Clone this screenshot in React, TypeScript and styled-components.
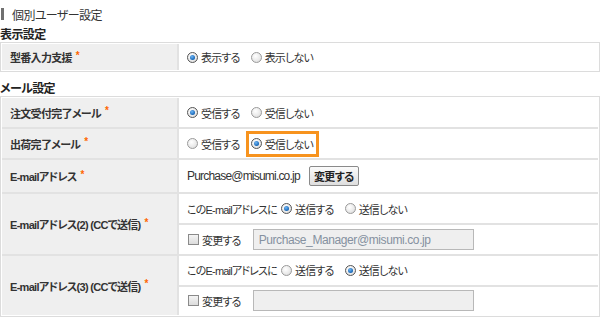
import React from "react";
import styled, { createGlobalStyle, css } from "styled-components";

const Global = createGlobalStyle`
  html, body { margin: 0; padding: 0; background: #fff; }
  body {
    font-family: Arial, "Liberation Sans", "Noto Sans CJK JP", sans-serif;
    font-feature-settings: "palt" 1;
    color: #333;
    font-size: 11px;
  }
  button { font-feature-settings: "palt" 1; }
`;

const Page = styled.div`
  width: 600px;
  height: 320px;
  overflow: hidden;
`;

const Title = styled.h1`
  margin: 0;
  height: 28px;
  display: flex;
  align-items: center;
  gap: 8px;
  padding-left: 1px;
  font-size: 12px;
  letter-spacing: -0.6px;
  font-weight: normal;
  color: #333;
  &::before {
    content: "";
    width: 3px;
    height: 12px;
    background: #707070;
  }
`;

const SectionHeading = styled.h2<{ $top?: number }>`
  margin: ${(p) => p.$top ?? 0}px 0 0 0;
  height: 14px;
  line-height: 14px;
  font-size: 12px;
  letter-spacing: -0.6px;
  font-weight: bold;
  color: #222;
`;

const Table = styled.div`
  display: grid;
  grid-template-columns: 177px 1fr;
  border: 1px solid #dcdcdc;
  padding: 1px;
  width: 596px;
`;

const Label = styled.div<{ $h: number; $last?: boolean }>`
  height: ${(p) => p.$h}px;
  background: #efefef;
  display: flex;
  align-items: center;
  padding-left: 8px;
  font-weight: bold;
  font-size: 11px;
  letter-spacing: -0.7px;
  color: #333;
  border-right: 2px solid #e2e2e2;
  ${(p) =>
    !p.$last &&
    css`
      border-bottom: 2px solid #e2e2e2;
    `}
  box-sizing: border-box;
`;

const Value = styled.div<{ $h: number; $last?: boolean }>`
  height: ${(p) => p.$h}px;
  display: flex;
  flex-direction: column;
  box-sizing: border-box;
  ${(p) =>
    !p.$last &&
    css`
      border-bottom: 2px solid #e2e2e2;
    `}
`;

const Line = styled.div<{ $sep?: boolean }>`
  flex: 1;
  display: flex;
  align-items: center;
  padding-left: 8px;
  ${(p) =>
    p.$sep &&
    css`
      border-bottom: 2px solid #e2e2e2;
    `}
`;

const Req = styled.span`
  color: #f60;
  font-size: 10px;
  margin-left: 4px;
  position: relative;
  top: -2px;
`;

const Choice = styled.label<{ $hl?: boolean }>`
  display: inline-flex;
  align-items: center;
  gap: 3px;
  margin-right: 11px;
  color: #333;
  font-size: 11px;
  letter-spacing: -0.8px;
  ${(p) =>
    p.$hl &&
    css`
      border: 3px solid #f7931e;
      padding: 2px 3px 2px 2px;
      margin-left: -5px;
    `}
`;

const RadioDot = styled.span<{ $on?: boolean }>`
  width: 11px;
  height: 11px;
  border-radius: 50%;
  box-sizing: border-box;
  border: 1px solid #9a9a9a;
  background: radial-gradient(circle at 40% 35%, #ffffff 0%, #e8e8e8 60%, #cfcfcf 100%);
  display: inline-flex;
  align-items: center;
  justify-content: center;
  ${(p) =>
    p.$on &&
    css`
      border-color: #555;
      &::after {
        content: "";
        width: 5px;
        height: 5px;
        border-radius: 50%;
        background: radial-gradient(circle at 40% 35%, #6fb6f5 0%, #1565b5 70%, #0a3d78 100%);
      }
    `}
`;

const Check = styled.span`
  width: 11px;
  height: 11px;
  box-sizing: border-box;
  border: 1px solid #8a8a8a;
  background: linear-gradient(#f4f4f4, #dcdcdc);
  display: inline-block;
  margin-right: 3px;
  margin-left: 1px;
`;

const Plain = styled.span`
  font-size: 12px;
  letter-spacing: -0.8px;
  color: #333;
  margin-right: 9px;
`;

const Small = styled.span`
  font-size: 11px;
  letter-spacing: -0.8px;
  color: #333;
  margin-right: 4px;
`;

const Button = styled.button`
  height: 20px;
  width: 50px;
  padding: 0;
  font-family: inherit;
  font-size: 11px;
  letter-spacing: -0.6px;
  font-weight: bold;
  color: #222;
  border: 1px solid #8a8a8a;
  border-radius: 2px;
  background: linear-gradient(#fbfbfb, #dedede);
`;

const TextBox = styled.div`
  margin-left: 8px;
  width: 221px;
  height: 21px;
  box-sizing: border-box;
  border: 1px solid #b8b8b8;
  background: #efefef;
  color: #8591a0;
  font-size: 12px;
  letter-spacing: -0.4px;
  display: flex;
  align-items: center;
  padding-left: 5px;
`;

function Radio({ on, children, hl }: { on?: boolean; children: React.ReactNode; hl?: boolean }) {
  return (
    <Choice $hl={hl}>
      <RadioDot $on={on} />
      {children}
    </Choice>
  );
}

export default function App() {
  return (
    <Page>
      <Global />
      <Title>個別ユーザー設定</Title>
      <SectionHeading>表示設定</SectionHeading>
      <Table>
        <Label $h={26} $last>
          型番入力支援<Req>*</Req>
        </Label>
        <Value $h={26} $last>
          <Line>
            <Radio on>表示する</Radio>
            <Radio>表示しない</Radio>
          </Line>
        </Value>
      </Table>
      <SectionHeading $top={10}>メール設定</SectionHeading>
      <Table>
        <Label $h={31}>
          注文受付完了メール<Req>*</Req>
        </Label>
        <Value $h={31}>
          <Line>
            <Radio on>受信する</Radio>
            <Radio>受信しない</Radio>
          </Line>
        </Value>
        <Label $h={31}>
          出荷完了メール<Req>*</Req>
        </Label>
        <Value $h={31}>
          <Line>
            <Radio>受信する</Radio>
            <Radio on hl>
              受信しない
            </Radio>
          </Line>
        </Value>
        <Label $h={34}>
          E-mailアドレス<Req>*</Req>
        </Label>
        <Value $h={34}>
          <Line>
            <Plain>Purchase@misumi.co.jp</Plain>
            <Button>変更する</Button>
          </Line>
        </Value>
        <Label $h={62}>
          E-mailアドレス(2) (CCで送信)<Req>*</Req>
        </Label>
        <Value $h={62}>
          <Line $sep>
            <Small>このE-mailアドレスに</Small>
            <Radio on>送信する</Radio>
            <Radio>送信しない</Radio>
          </Line>
          <Line>
            <Check />
            <Small>変更する</Small>
            <TextBox>Purchase_Manager@misumi.co.jp</TextBox>
          </Line>
        </Value>
        <Label $h={59} $last>
          E-mailアドレス(3) (CCで送信)<Req>*</Req>
        </Label>
        <Value $h={59} $last>
          <Line $sep>
            <Small>このE-mailアドレスに</Small>
            <Radio>送信する</Radio>
            <Radio on>送信しない</Radio>
          </Line>
          <Line>
            <Check />
            <Small>変更する</Small>
            <TextBox />
          </Line>
        </Value>
      </Table>
    </Page>
  );
}
